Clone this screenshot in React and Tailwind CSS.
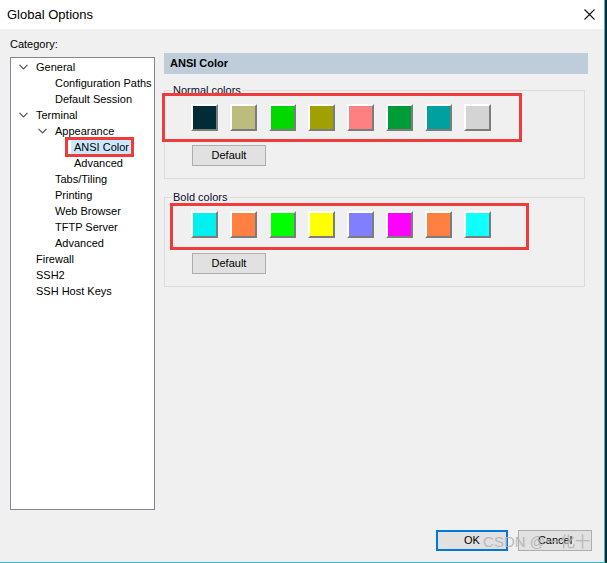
import React from 'react';

const font = { fontFamily: '"Liberation Sans", Arial, sans-serif' };

const tree = [
  { label: 'General', level: 0, open: true },
  { label: 'Configuration Paths', level: 1 },
  { label: 'Default Session', level: 1 },
  { label: 'Terminal', level: 0, open: true },
  { label: 'Appearance', level: 1, open: true },
  { label: 'ANSI Color', level: 2, selected: true },
  { label: 'Advanced', level: 2 },
  { label: 'Tabs/Tiling', level: 1 },
  { label: 'Printing', level: 1 },
  { label: 'Web Browser', level: 1 },
  { label: 'TFTP Server', level: 1 },
  { label: 'Advanced', level: 1 },
  { label: 'Firewall', level: 0 },
  { label: 'SSH2', level: 0 },
  { label: 'SSH Host Keys', level: 0 },
];

const normalColors = ['#012b36', '#bcbc7c', '#00d800', '#a0a000', '#ff8080', '#009c37', '#00a0a0', '#d4d4d4'];
const boldColors = ['#00f0f0', '#ff8040', '#00ff00', '#ffff00', '#8080ff', '#ff00ff', '#ff8040', '#10ffff'];

const indent = ['ml-[8px]', 'ml-[27px]', 'ml-[46px]'];

const Chevron = () => (
  <svg width="9" height="6" viewBox="0 0 9 6" className="block">
    <path d="M0.5 0.8 L4.5 4.8 L8.5 0.8" fill="none" stroke="#555" strokeWidth="1.2" />
  </svg>
);

const TreeRow = ({ item }) => (
  <div className={`flex items-center h-[16px] ${indent[item.level]}`}>
    <span className="w-[17px] flex items-center shrink-0">{item.open && <Chevron />}</span>
    {item.selected ? (
      <span className="relative bg-[#cce8ff] px-[3px] -ml-[3px] leading-[16px]">
        {item.label}
        <span className="absolute -left-[6px] -right-[2px] -top-[2px] -bottom-[2px] border-[3px] border-[#ee3b3b]"></span>
      </span>
    ) : (
      <span className="leading-[16px] whitespace-nowrap">{item.label}</span>
    )}
  </div>
);

const Swatch = ({ color }) => (
  <div className="w-[27px] h-[27px] border-[2px] border-t-white border-l-white border-r-[#7c7c7c] border-b-[#7c7c7c] shadow-[inset_1px_1px_0_#e4e4e4]">
    <div className="w-full h-full" style={{ backgroundColor: color }}></div>
  </div>
);

const WinButton = ({ children, primary, w }) => (
  <button
    className={`${w} h-[21px] bg-[#e1e1e1] text-[11px] text-black leading-none ${
      primary ? 'border-2 border-[#0078d7]' : 'border border-[#adadad]'
    }`}
  >
    {children}
  </button>
);

const ColorGroup = ({ title, colors, boxClass, height }) => (
  <div className={`relative border border-[#dcdcdc] ${height} w-[421px]`}>
    <span className="absolute -top-[9px] left-[7px] px-[1px] bg-[#f0f0f0] text-[#0c0c2c] leading-[16px]">{title}</span>
    <div className={`relative z-10 border-[3px] border-[#ee3b3b] flex gap-[12px] ${boxClass}`}>
      {colors.map((c, i) => (
        <Swatch key={i} color={c} />
      ))}
    </div>
    <div className="ml-[27px] mt-[3px]">
      <WinButton w="w-[74px]">Default</WinButton>
    </div>
  </div>
);

export default function App() {
  return (
    <div className="w-[607px] h-[563px] flex bg-[#0e2a33] text-[11px] text-black" style={font}>
      <div className="w-[605px] h-[563px] flex flex-col border-r border-b border-[#3fb7c8] bg-[#f0f0f0]">
        {/* Title bar */}
        <div className="h-[29px] bg-white flex items-center justify-between pl-[7px] pr-[9px] shrink-0">
          <span className="text-[13px] leading-none">Global Options</span>
          <svg width="11" height="11" viewBox="0 0 11 11">
            <path d="M0.5 0.5 L10.5 10.5 M10.5 0.5 L0.5 10.5" stroke="#111" strokeWidth="1.1" />
          </svg>
        </div>

        {/* Body */}
        <div className="flex-1 flex flex-col">
          <div className="flex">
            <div className="pl-[10px] pt-[7px]">
              <div className="leading-[16px] mb-[5px]">Category:</div>
              <div className="w-[145px] h-[453px] bg-white border border-[#828790] pt-[1px]">
                {tree.map((item, i) => (
                  <TreeRow key={i} item={item} />
                ))}
              </div>
            </div>

            <div className="ml-[9px] pt-[24px] w-[424px]">
              <div className="h-[21px] bg-[#bfcddb] flex items-center pl-[6px] font-bold">ANSI Color</div>
              <div className="mt-[16px]">
                <ColorGroup
                  title="Normal colors"
                  colors={normalColors}
                  height="h-[89px]"
                  boxClass="w-[360px] h-[49px] -ml-[3px] mt-[2px] pl-[26px] pt-[8px]"
                />
              </div>
              <div className="mt-[18px]">
                <ColorGroup
                  title="Bold colors"
                  colors={boldColors}
                  height="h-[90px]"
                  boxClass="w-[359px] h-[47px] ml-[5px] mt-[5px] pl-[18px] pt-[5px]"
                />
              </div>
            </div>
          </div>

          {/* Footer */}
          <div className="mt-auto flex justify-end gap-[10px] pr-[12px] pb-[11px] relative">
            <WinButton primary w="w-[72px]">OK</WinButton>
            <WinButton w="w-[74px]">Cancel</WinButton>
            <span
              className="absolute right-[14px] bottom-[9px] text-[15px] text-[#b4b4b4] opacity-90"
              style={{ fontFamily: '"Liberation Sans", "Noto Sans CJK SC", sans-serif' }}
            >
              CSDN @一化十
            </span>
          </div>
        </div>
      </div>
    </div>
  );
}
